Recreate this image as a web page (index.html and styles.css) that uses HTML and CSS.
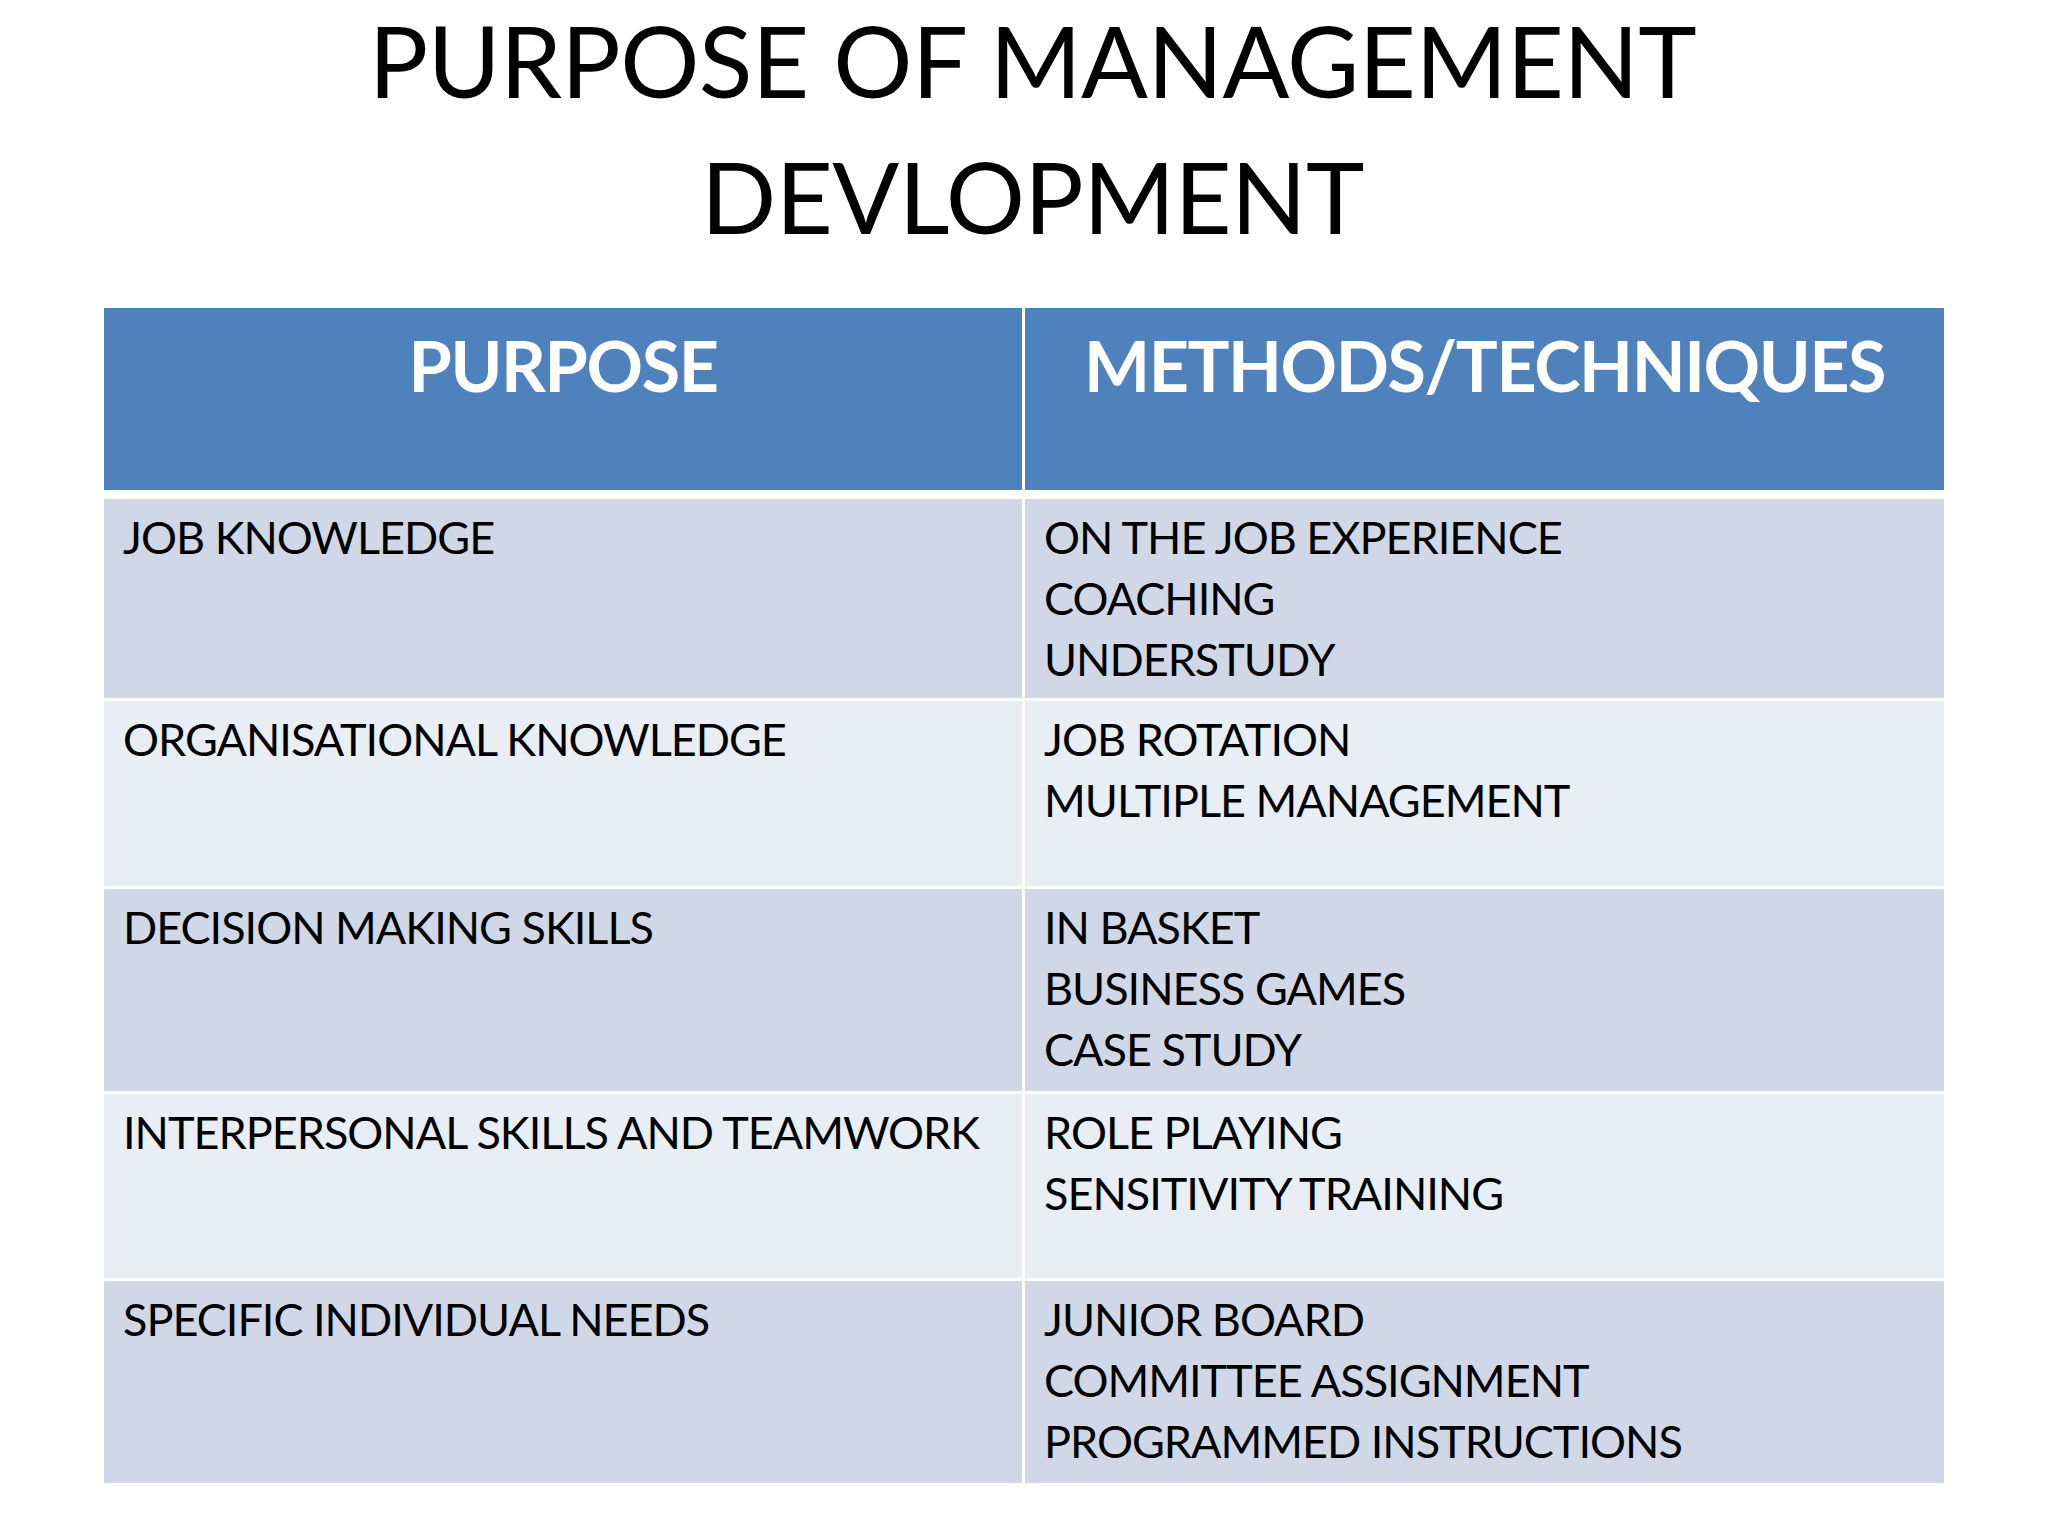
FILE: index.html
```html
<!DOCTYPE html>
<html lang="en">
<head>
<meta charset="utf-8">
<title>Purpose of Management Devlopment</title>
<link rel="stylesheet" href="styles.css">
</head>
<body>
<main class="slide">
  <h1 class="title">PURPOSE OF MANAGEMENT<br>DEVLOPMENT</h1>
  <div class="table">
    <div class="cell head">PURPOSE</div>
    <div class="cell head">METHODS/TECHNIQUES</div>

    <div class="cell band1 r3a">JOB KNOWLEDGE</div>
    <div class="cell band1 r3a">ON THE JOB EXPERIENCE<br>COACHING<br>UNDERSTUDY</div>

    <div class="cell band2 r2">ORGANISATIONAL KNOWLEDGE</div>
    <div class="cell band2 r2">JOB ROTATION<br>MULTIPLE MANAGEMENT</div>

    <div class="cell band1 r3">DECISION MAKING SKILLS</div>
    <div class="cell band1 r3">IN BASKET<br>BUSINESS GAMES<br>CASE STUDY</div>

    <div class="cell band2 r2b">INTERPERSONAL SKILLS AND TEAMWORK</div>
    <div class="cell band2 r2b">ROLE PLAYING<br>SENSITIVITY TRAINING</div>

    <div class="cell band1 r3">SPECIFIC INDIVIDUAL NEEDS</div>
    <div class="cell band1 r3">JUNIOR BOARD<br>COMMITTEE ASSIGNMENT<br>PROGRAMMED INSTRUCTIONS</div>
  </div>
</main>
</body>
</html>
```

FILE: styles.css
```css
html, body {
  margin: 0;
  padding: 0;
  background: #ffffff;
}

.slide {
  width: 2048px;
  height: 1536px;
  overflow: hidden;
  font-family: Lato, "Open Sans", "Liberation Sans", sans-serif;
  color: #000000;
}

.title {
  margin: -8px 0 44px 17px;
  font-weight: 400;
  font-size: 99px;
  line-height: 136px;
  letter-spacing: -0.6px;
  text-align: center;
}

.table {
  display: grid;
  grid-template-columns: 918px 919px;
  column-gap: 3px;
  row-gap: 3px;
  width: 1840px;
  margin-left: 104px;
}

.cell {
  box-sizing: border-box;
  font-size: 45px;
  line-height: 61px;
  letter-spacing: -1px;
  white-space: nowrap;
  padding: 8px 19px 0 19px;
}

.head {
  height: 182px;
  margin-bottom: 6px;
  background: #4f81bd;
  color: #ffffff;
  font-weight: 700;
  font-size: 70px;
  line-height: 84px;
  letter-spacing: -1.4px;
  padding-top: 15px;
  text-align: center;
}

.band1 { background: #d0d8e8; }
.band2 { background: #e9edf4; }

.r3a { height: 199px; }
.r3 { height: 202px; }
.r2 { height: 185px; }
.r2b { height: 184px; }
```
